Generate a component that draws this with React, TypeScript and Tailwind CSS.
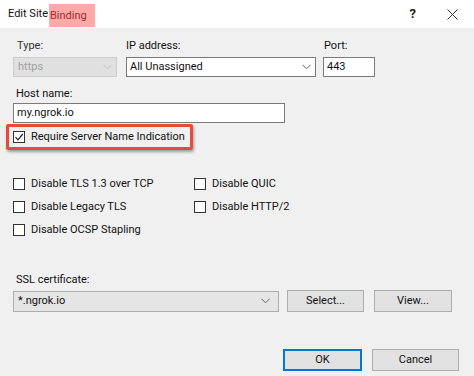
import React from 'react';

const Chevron = ({ light = false }: { light?: boolean }) => (
  <svg width="9" height="6" viewBox="0 0 9 6" className="shrink-0">
    <path d="M0.5 0.8 L4.5 4.8 L8.5 0.8" fill="none" stroke={light ? '#c4c4c4' : '#606060'} strokeWidth="1" />
  </svg>
);

const Check = ({ checked = false }: { checked?: boolean }) => (
  <span className="w-[12px] h-[12px] border border-[#333333] bg-white flex items-center justify-center shrink-0">
    {checked && (
      <svg width="10" height="10" viewBox="0 0 10 10">
        <path d="M1.5 5.2 L4 7.8 L8.8 2" fill="none" stroke="#222" strokeWidth="1.2" />
      </svg>
    )}
  </span>
);

const CheckRow = ({ label, checked = false }: { label: string; checked?: boolean }) => (
  <div className="flex items-center gap-[6px] h-[23px] whitespace-nowrap">
    <Check checked={checked} />
    <span>{label}</span>
  </div>
);

const Button = ({ label, primary = false, w }: { label: string; primary?: boolean; w: string }) => (
  <div
    className={`${w} h-[22px] flex items-center justify-center bg-[#e1e1e1] border ${
      primary ? 'border-[#0078d7] shadow-[inset_0_0_0_1px_#0078d7]' : 'border-[#adadad]'
    }`}
  >
    {label}
  </div>
);

export default function App() {
  return (
    <div
      className="w-[474px] h-[376px] bg-[#f0f0f0] flex flex-col text-[11px] leading-[16px] text-[#111] overflow-hidden"
      style={{ fontFamily: 'Roboto, "Noto Sans", sans-serif' }}
    >
      {/* title bar */}
      <div className="h-[28px] bg-white flex items-center pl-[8px] shrink-0 text-[11px]">
        <span>Edit Site</span>
        <span className="ml-[1px] h-[23px] mt-[3px] pl-[1px] w-[46px] bg-[#ffa9a9] text-[#a02c2c] flex items-center">Binding</span>
        <span className="ml-auto mr-[31px] text-[13px] text-[#222] font-bold">?</span>
        <svg width="11" height="11" viewBox="0 0 11 11" className="mr-[16px]">
          <path d="M0.5 0.5 L10.5 10.5 M10.5 0.5 L0.5 10.5" stroke="#333" strokeWidth="1" />
        </svg>
      </div>

      <div className="flex flex-col pl-[13px] pt-[10px]">
        {/* type / ip / port */}
        <div className="flex gap-[9px]">
          <div className="flex flex-col w-[104px]">
            <span className="pl-[4px] text-[#333]">Type:</span>
            <div className="mt-[3px] h-[20px] bg-[#e0e0e0] border border-[#cccccc] flex items-center justify-between px-[4px] text-[#a0a0a0]">
              <span>https</span>
              <Chevron light />
            </div>
          </div>
          <div className="flex flex-col w-[190px]">
            <span>IP address:</span>
            <div className="mt-[3px] h-[20px] bg-white border border-[#7a7a7a] flex items-center justify-between pl-[3px] pr-[4px]">
              <span>All Unassigned</span>
              <Chevron />
            </div>
          </div>
          <div className="flex flex-col w-[52px] -ml-[2px]">
            <span className="pl-[1px]">Port:</span>
            <div className="mt-[3px] h-[20px] bg-white border border-[#7a7a7a] flex items-center pl-[3px]">443</div>
          </div>
        </div>

        {/* host name */}
        <span className="mt-[9px] pl-[3px]">Host name:</span>
        <div className="mt-[1px] w-[272px] h-[20px] bg-white border border-[#7a7a7a] flex items-center pl-[3px]">my.ngrok.io</div>

        {/* highlighted SNI */}
        <div className="-ml-[7px] mt-[1px] w-[187px] h-[26px] border-[3px] border-[#e8493f] rounded-[2px] shadow-[1px_2px_3px_rgba(0,0,0,0.35)] flex items-center pl-[4px] gap-[6px] whitespace-nowrap">
          <Check checked />
          <span>Require Server Name Indication</span>
        </div>

        {/* options */}
        <div className="mt-[22px] flex">
          <div className="flex flex-col w-[181px]">
            <CheckRow label="Disable TLS 1.3 over TCP" />
            <CheckRow label="Disable Legacy TLS" />
            <CheckRow label="Disable OCSP Stapling" />
          </div>
          <div className="flex flex-col">
            <CheckRow label="Disable QUIC" />
            <CheckRow label="Disable HTTP/2" />
          </div>
        </div>

        {/* ssl certificate */}
        <span className="mt-[31px] pl-[3px]">SSL certificate:</span>
        <div className="mt-[2px] flex items-center">
          <div className="w-[266px] h-[21px] bg-[#e5e5e5] border border-[#adadad] flex items-center justify-between pl-[4px] pr-[8px]">
            <span>*.ngrok.io</span>
            <Chevron />
          </div>
          <div className="ml-[8px] flex gap-[10px]">
            <Button label="Select..." w="w-[77px]" />
            <Button label="View..." w="w-[78px]" />
          </div>
        </div>

        {/* ok / cancel */}
        <div className="mt-[37px] flex justify-end pr-[15px] gap-[10px]">
          <Button label="OK" primary w="w-[79px]" />
          <Button label="Cancel" w="w-[87px]" />
        </div>
      </div>
    </div>
  );
}
